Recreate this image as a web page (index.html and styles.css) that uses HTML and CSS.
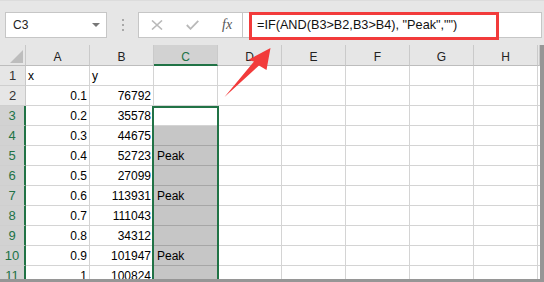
FILE: index.html
```html
<!DOCTYPE html>
<html lang="en">
<head>
    <meta charset="UTF-8">
    <title>Peak formula</title>
    <link rel="stylesheet" href="styles.css">
</head>
<body>
    <div class="toolbar">
        <div class="namebox">
            <span>C3</span>
            <span class="caret"></span>
        </div>
        <div class="grip"><i></i><i></i><i></i></div>
        <div class="fbuttons">
            <svg width="12" height="10" viewBox="0 0 12 10"><path d="M1 0.5 L11 9.5 M11 0.5 L1 9.5" stroke="#b9b9b9" stroke-width="1.6" fill="none"/></svg>
            <svg width="13" height="10" viewBox="0 0 13 10"><path d="M0.8 5 L4.5 8.8 L12.3 0.8" stroke="#b9b9b9" stroke-width="1.8" fill="none"/></svg>
            <span class="fx">fx</span>
        </div>
        <div class="formula">=IF(AND(B3&gt;B2,B3&gt;B4), "Peak","")</div>
        <div class="callout"></div>
    </div>

    <div class="sheet">
        <div class="corner"><span></span></div>
        <div class="hd">A</div>
        <div class="hd">B</div>
        <div class="hd active">C</div>
        <div class="hd">D</div>
        <div class="hd">E</div>
        <div class="hd">F</div>
        <div class="hd">G</div>
        <div class="hd">H</div>
        <div class="hd"></div>

        <div class="rh">1</div><div class="cell">x</div><div class="cell">y</div><div class="cell"></div><div class="cell"></div><div class="cell"></div><div class="cell"></div><div class="cell"></div><div class="cell"></div><div class="cell"></div>
        <div class="rh">2</div><div class="cell num">0.1</div><div class="cell num">76792</div><div class="cell"></div><div class="cell"></div><div class="cell"></div><div class="cell"></div><div class="cell"></div><div class="cell"></div><div class="cell"></div>
        <div class="rh on">3</div><div class="cell num">0.2</div><div class="cell num">35578</div><div class="cell"></div><div class="cell"></div><div class="cell"></div><div class="cell"></div><div class="cell"></div><div class="cell"></div><div class="cell"></div>
        <div class="rh on">4</div><div class="cell num">0.3</div><div class="cell num">44675</div><div class="cell sel"></div><div class="cell"></div><div class="cell"></div><div class="cell"></div><div class="cell"></div><div class="cell"></div><div class="cell"></div>
        <div class="rh on">5</div><div class="cell num">0.4</div><div class="cell num">52723</div><div class="cell sel">Peak</div><div class="cell"></div><div class="cell"></div><div class="cell"></div><div class="cell"></div><div class="cell"></div><div class="cell"></div>
        <div class="rh on">6</div><div class="cell num">0.5</div><div class="cell num">27099</div><div class="cell sel"></div><div class="cell"></div><div class="cell"></div><div class="cell"></div><div class="cell"></div><div class="cell"></div><div class="cell"></div>
        <div class="rh on">7</div><div class="cell num">0.6</div><div class="cell num">113931</div><div class="cell sel">Peak</div><div class="cell"></div><div class="cell"></div><div class="cell"></div><div class="cell"></div><div class="cell"></div><div class="cell"></div>
        <div class="rh on">8</div><div class="cell num">0.7</div><div class="cell num">111043</div><div class="cell sel"></div><div class="cell"></div><div class="cell"></div><div class="cell"></div><div class="cell"></div><div class="cell"></div><div class="cell"></div>
        <div class="rh on">9</div><div class="cell num">0.8</div><div class="cell num">34312</div><div class="cell sel"></div><div class="cell"></div><div class="cell"></div><div class="cell"></div><div class="cell"></div><div class="cell"></div><div class="cell"></div>
        <div class="rh on">10</div><div class="cell num">0.9</div><div class="cell num">101947</div><div class="cell sel">Peak</div><div class="cell"></div><div class="cell"></div><div class="cell"></div><div class="cell"></div><div class="cell"></div><div class="cell"></div>
        <div class="rh on">11</div><div class="cell num">1</div><div class="cell num">100824</div><div class="cell sel"></div><div class="cell"></div><div class="cell"></div><div class="cell"></div><div class="cell"></div><div class="cell"></div><div class="cell"></div>

        <div class="selection"></div>
    </div>

    <svg class="arrow" width="544" height="282" viewBox="0 0 544 282">
        <polygon points="224.5,97 254,61.5 248,60 270.5,48 266.5,70 259,65.5" fill="#f23b3b"/>
    </svg>
</body>
</html>
```

FILE: styles.css
```css
* {
    box-sizing: border-box;
    margin: 0;
    padding: 0;
}

body {
    width: 544px;
    height: 282px;
    overflow: hidden;
    background-color: #e6e6e6;
    font-family: "Liberation Sans", Arial, sans-serif;
    color: #000;
    position: relative;
}

.toolbar {
    height: 45px;
    display: flex;
    align-items: flex-start;
    padding-top: 11px;
    padding-left: 5px;
    border-top: 1px solid #dcdcdc;
    position: relative;
}

.namebox {
    width: 102px;
    height: 26px;
    background-color: #fff;
    border: 1px solid #c6c6c6;
    display: flex;
    align-items: center;
    justify-content: space-between;
    padding: 0 6px 0 7px;
    font-size: 12px;
    color: #222;
}

.caret {
    width: 0;
    height: 0;
    border-left: 4px solid transparent;
    border-right: 4px solid transparent;
    border-top: 4px solid #777;
}

.grip {
    width: 31px;
    height: 26px;
    display: flex;
    flex-direction: column;
    align-items: center;
    justify-content: center;
    gap: 3px;
}

.grip i {
    display: block;
    width: 2px;
    height: 2px;
    background-color: #a8a8a8;
}

.fbuttons {
    width: 105px;
    height: 26px;
    background-color: #fff;
    border: 1px solid #c6c6c6;
    display: flex;
    align-items: center;
    padding-left: 12px;
    gap: 23px;
}

.fx {
    font-family: "Liberation Serif", serif;
    font-style: italic;
    font-size: 14px;
    color: #555;
}

.formula {
    width: 299px;
    height: 26px;
    background-color: #fff;
    border: 1px solid #c6c6c6;
    border-left: none;
    font-size: 12.7px;
    line-height: 25px;
    padding-left: 14px;
    color: #111;
    white-space: nowrap;
}

.callout {
    position: absolute;
    left: 249px;
    top: 11px;
    width: 250px;
    height: 28px;
    border: 3px solid #f23b3b;
}

.sheet {
    position: relative;
    height: 237px;
    overflow: hidden;
    display: grid;
    grid-template-columns: 26px repeat(8, 64px) 2px;
    grid-template-rows: 21px;
    grid-auto-rows: 20px;
    background-color: #fff;
    border-right: 4px solid #969696;
    border-bottom: 3px solid #969696;
}

.corner {
    background-color: #e6e6e6;
    border-right: 1px solid #c8c8c8;
    border-bottom: 1px solid #bdbdbd;
    position: relative;
}

.corner span {
    position: absolute;
    right: 2px;
    bottom: 2px;
    width: 0;
    height: 0;
    border-left: 13px solid transparent;
    border-bottom: 13px solid #bdbdbd;
}

.hd {
    background-color: #e6e6e6;
    border-right: 1px solid #cacaca;
    border-bottom: 1px solid #bdbdbd;
    text-align: center;
    font-size: 12px;
    line-height: 18px;
    padding-top: 3px;
    color: #222;
}

.hd.active {
    background-color: #d2d2d2;
    border-bottom: 2px solid #217346;
    color: #217346;
}

.rh {
    background-color: #e6e6e6;
    border-right: 1px solid #c8c8c8;
    border-bottom: 1px solid #cfcfcf;
    text-align: center;
    font-size: 13px;
    line-height: 20px;
    color: #333;
}

.rh.on {
    background-color: #d2d2d2;
    border-right: 2px solid #217346;
    color: #217346;
}

.cell {
    border-right: 1px solid #d4d4d4;
    border-bottom: 1px solid #d4d4d4;
    font-size: 12px;
    line-height: 20px;
    padding: 0 2px;
    white-space: nowrap;
    overflow: hidden;
}

.num {
    text-align: right;
}

.cell.sel {
    background-color: #c6c6c6;
    border-bottom-color: #a6a6a6;
    padding-left: 3px;
}

.selection {
    position: absolute;
    left: 152px;
    top: 61px;
    width: 67px;
    height: 220px;
    border: 2px solid #217346;
}

.arrow {
    position: absolute;
    left: 0;
    top: 0;
}
```
